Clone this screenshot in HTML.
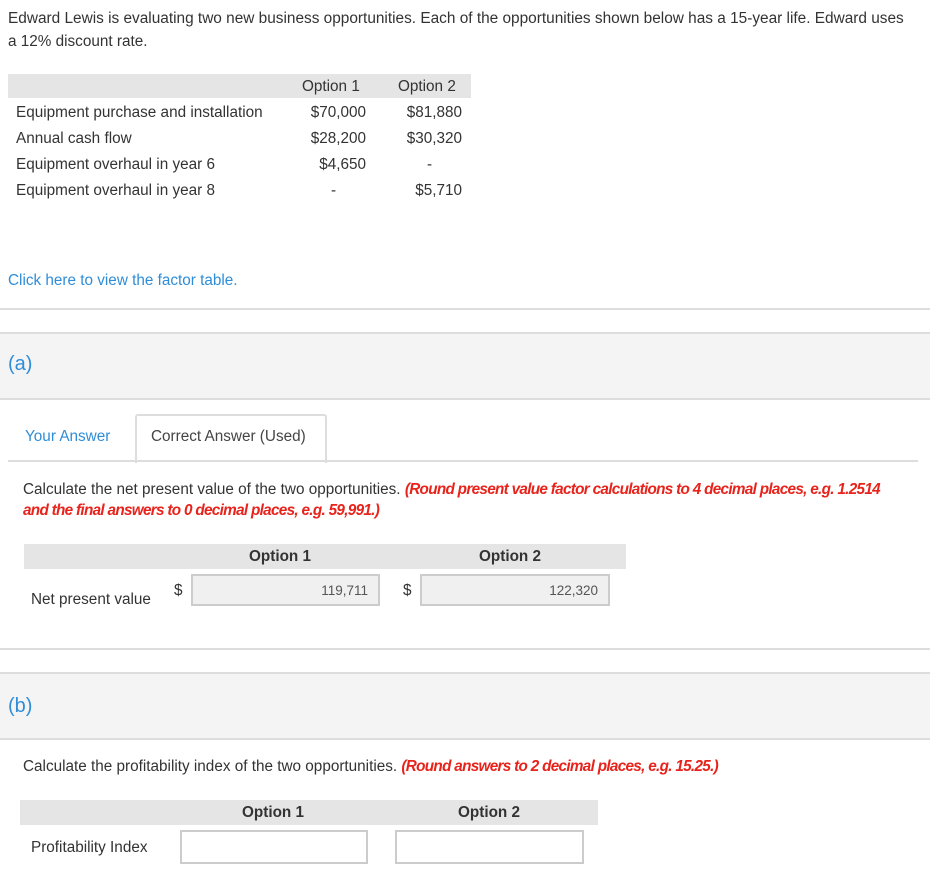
<!DOCTYPE html>
<html><head><style>
body{margin:0;width:930px;height:894px;background:#fff;font-family:"Liberation Sans",sans-serif;color:#333;position:relative;overflow:hidden}
.a{position:absolute;white-space:nowrap}
.t{font-size:15.3px}
.gray{background:#e5e5e5;position:absolute}
.line{position:absolute;left:0;width:930px;height:2px;background:#ddd}
.sec{position:absolute;left:0;width:930px;background:#f4f4f4;border-top:2px solid #ddd;border-bottom:2px solid #ddd}
.blue{color:#2f8dd8}
.red{color:#e8231b;font-style:italic;font-weight:bold;letter-spacing:-0.7px}
.inp{position:absolute;box-sizing:border-box;border:2px solid #ccc}
</style></head><body>
<div class="a t" style="left:8px;top:10px;font-size:15.4px">Edward Lewis is evaluating two new business opportunities. Each of the opportunities shown below has a 15-year life. Edward uses</div>
<div class="a t" style="left:8px;top:33px">a 12% discount rate.</div>

<div class="gray" style="left:8px;top:74px;width:463px;height:24px"></div>
<div class="a t" style="left:302px;top:78px">Option 1</div>
<div class="a t" style="left:398px;top:78px">Option 2</div>
<div class="a t" style="left:16px;top:104px">Equipment purchase and installation</div>
<div class="a t" style="left:16px;top:130px">Annual cash flow</div>
<div class="a t" style="left:16px;top:156px">Equipment overhaul in year 6</div>
<div class="a t" style="left:16px;top:182px">Equipment overhaul in year 8</div>
<div class="a t" style="right:564px;top:104px">$70,000</div>
<div class="a t" style="right:564px;top:130px">$28,200</div>
<div class="a t" style="right:564px;top:156px">$4,650</div>
<div class="a t" style="left:331px;top:182px">-</div>
<div class="a t" style="right:468px;top:104px">$81,880</div>
<div class="a t" style="right:468px;top:130px">$30,320</div>
<div class="a t" style="left:427px;top:156px">-</div>
<div class="a t" style="right:468px;top:182px">$5,710</div>

<div class="a t blue" style="left:8px;top:272px">Click here to view the factor table.</div>
<div class="line" style="top:308px"></div>
<div class="sec" style="top:332px;height:64px"></div>
<div class="a blue" style="left:8px;top:353px;font-size:20px">(a)</div>

<div class="a t blue" style="left:25px;top:428px">Your Answer</div>
<div class="a" style="left:135px;top:414px;width:188px;height:47px;border:2px solid #ddd;border-bottom:none;border-radius:3px 3px 0 0;background:#fff"></div>
<div class="a t" style="left:151px;top:428px;color:#444">Correct Answer (Used)</div>
<div class="a" style="left:8px;top:460px;width:910px;height:2px;background:#ddd"></div>

<div class="a t" style="left:23px;top:481px">Calculate the net present value of the two opportunities. <span class="red">(Round present value factor calculations to 4 decimal places, e.g. 1.2514</span></div>
<div class="a t red" style="left:23px;top:502px">and the final answers to 0 decimal places, e.g. 59,991.)</div>

<div class="gray" style="left:24px;top:544px;width:602px;height:25px"></div>
<div class="a t" style="left:249px;top:548px;font-weight:bold">Option 1</div>
<div class="a t" style="left:479px;top:548px;font-weight:bold">Option 2</div>
<div class="a t" style="left:31px;top:591px">Net present value</div>
<div class="a t" style="left:174px;top:582px">$</div>
<div class="inp" style="left:191px;top:574px;width:189px;height:32px;background:#f0f0f0"></div>
<div class="a" style="right:562px;top:583px;font-size:13.5px;color:#555">119,711</div>
<div class="a t" style="left:403px;top:582px">$</div>
<div class="inp" style="left:420px;top:574px;width:190px;height:32px;background:#f0f0f0"></div>
<div class="a" style="right:332px;top:583px;font-size:13.5px;color:#555">122,320</div>

<div class="line" style="top:648px"></div>
<div class="sec" style="top:672px;height:64px"></div>
<div class="a blue" style="left:8px;top:695px;font-size:20px">(b)</div>

<div class="a t" style="left:23px;top:758px">Calculate the profitability index of the two opportunities. <span class="red">(Round answers to 2 decimal places, e.g. 15.25.)</span></div>
<div class="gray" style="left:20px;top:800px;width:578px;height:25px"></div>
<div class="a t" style="left:242px;top:804px;font-weight:bold">Option 1</div>
<div class="a t" style="left:458px;top:804px;font-weight:bold">Option 2</div>
<div class="a t" style="left:31px;top:839px">Profitability Index</div>
<div class="inp" style="left:180px;top:830px;width:188px;height:34px"></div>
<div class="inp" style="left:395px;top:830px;width:189px;height:34px"></div>
</body></html>
